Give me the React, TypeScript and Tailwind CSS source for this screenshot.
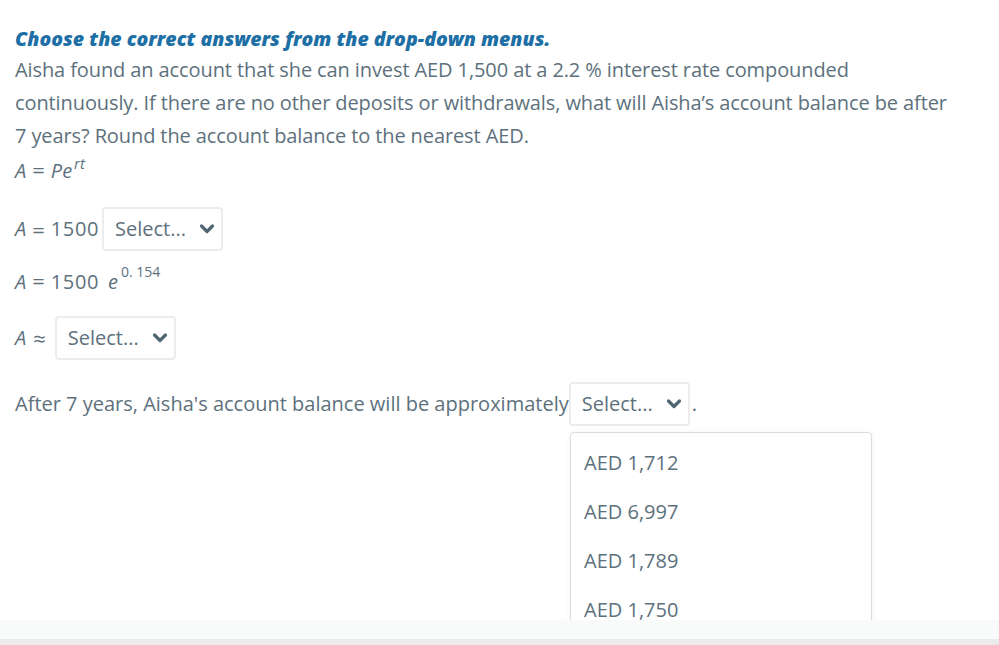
const options = ["AED 1,712", "AED 6,997", "AED 1,789", "AED 1,750"];

function Chevron() {
  return (
    <svg viewBox="0 0 16 12" className="h-[12px] w-[16px]" fill="none">
      <path d="M2.5 3 8 8.5 13.5 3" stroke="#4f6672" strokeWidth="3.2" strokeLinecap="round" strokeLinejoin="round" />
    </svg>
  );
}

function Select() {
  return (
    <span className="inline-flex h-[44px] w-[121px] items-center justify-between rounded-[4px] border-2 border-[#ececec] bg-white pl-[11px] pr-[6px]">
      <span>Select...</span>
      <Chevron />
    </span>
  );
}

function MathA() {
  return <span className="italic">A</span>;
}

function Eq({ sym = "=" }: { sym?: string }) {
  return <span className="mx-[6px] text-[22px] leading-none">{sym}</span>;
}

export default function App() {
  return (
    <div className="flex h-[645px] w-[999px] flex-col overflow-hidden bg-white font-['Open_Sans',sans-serif] text-[20px] text-[#5d717d]">
      <div className="relative h-[620px] overflow-hidden px-[15px] pt-[25px]">
        <h1 className="text-[19.5px] font-extrabold italic leading-[28px] text-[#1d6fa5]">
          Choose the correct answers from the drop-down menus.
        </h1>
        <p className="leading-[33px] tracking-[-0.1px]">
          Aisha found an account that she can invest AED 1,500 at a 2.2 % interest rate compounded
          <br />
          continuously. If there are no other deposits or withdrawals, what will Aisha’s account balance be after
          <br />7 years? Round the account balance to the nearest AED.
        </p>
        <div className="mt-[2px] leading-[34px]">
          <MathA />
          <Eq />
          <span className="italic">Pe</span>
          <sup className="-top-[9px] ml-[2px] text-[15px] italic">rt</sup>
        </div>

        <div className="mt-[19px] flex items-center gap-[3px]">
          <span className="flex items-center">
            <MathA />
            <Eq />
            <span className="tracking-[0.6px]">1500</span>
          </span>
          <Select />
        </div>

        <div className="mt-[12px] flex items-baseline leading-[38px]">
          <MathA />
          <Eq />
          <span className="tracking-[0.6px]">1500</span>
          <span className="ml-[9px] italic">e</span>
          <sup className="-top-[12px] ml-[3px] text-[14px]">0. 154</sup>
        </div>

        <div className="mt-[15px] flex items-center gap-[1px]">
          <span className="flex items-center">
            <MathA />
            <span className="ml-[7px] mr-[8px] text-[22px] leading-none">≈</span>
          </span>
          <Select />
        </div>

        <div className="mt-[22px] flex items-center">
          <span>After 7 years, Aisha's account balance will be approximately</span>
          <Select />
          <span className="ml-[2px]">.</span>
        </div>

        <ul className="ml-[555px] mt-[6px] w-[302px] rounded-[4px] border border-[#dcdcdc] bg-white pt-[5px] shadow-[0_1px_6px_rgba(0,0,0,0.06)]">
          {options.map((o) => (
            <li key={o} className="flex h-[49px] items-center pl-[13px]">
              {o}
            </li>
          ))}
        </ul>
      </div>
      <div className="h-[19px] bg-[#f9fbfa]" />
      <div className="flex-1 bg-[#ebebeb]" />
    </div>
  );
}
